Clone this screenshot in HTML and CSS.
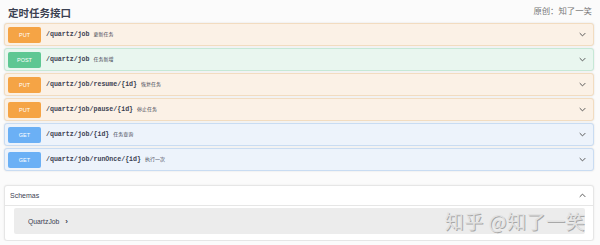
FILE: index.html
```html
<!DOCTYPE html>
<html>

<head>
    <title>定时任务接口</title>
    <link rel="stylesheet" href="styles.css">
</head>

<body>
    <div class="header">
        <h1>定时任务接口</h1>
        <span class="author">原创：知了一笑</span>
    </div>

    <div class="ops">
        <div class="op op-put">
            <span class="method">PUT</span>
            <span class="path">/quartz/job</span>
            <span class="desc">更新任务</span>
            <svg class="chevron" viewBox="0 0 10 6"><path d="M1 1l4 4 4-4"/></svg>
        </div>
        <div class="op op-post">
            <span class="method">POST</span>
            <span class="path">/quartz/job</span>
            <span class="desc">任务新增</span>
            <svg class="chevron" viewBox="0 0 10 6"><path d="M1 1l4 4 4-4"/></svg>
        </div>
        <div class="op op-put">
            <span class="method">PUT</span>
            <span class="path">/quartz/job/resume/{id}</span>
            <span class="desc">恢复任务</span>
            <svg class="chevron" viewBox="0 0 10 6"><path d="M1 1l4 4 4-4"/></svg>
        </div>
        <div class="op op-put">
            <span class="method">PUT</span>
            <span class="path">/quartz/job/pause/{id}</span>
            <span class="desc">停止任务</span>
            <svg class="chevron" viewBox="0 0 10 6"><path d="M1 1l4 4 4-4"/></svg>
        </div>
        <div class="op op-get">
            <span class="method">GET</span>
            <span class="path">/quartz/job/{id}</span>
            <span class="desc">任务查询</span>
            <svg class="chevron" viewBox="0 0 10 6"><path d="M1 1l4 4 4-4"/></svg>
        </div>
        <div class="op op-get">
            <span class="method">GET</span>
            <span class="path">/quartz/job/runOnce/{id}</span>
            <span class="desc">执行一次</span>
            <svg class="chevron" viewBox="0 0 10 6"><path d="M1 1l4 4 4-4"/></svg>
        </div>
    </div>

    <div class="schemas">
        <div class="schemas-head">
            <span>Schemas</span>
            <svg class="chevron-up" viewBox="0 0 10 6"><path d="M1 5l4-4 4 4"/></svg>
        </div>
        <div class="model">
            <span class="model-name">QuartzJob</span>
            <span class="model-arrow">›</span>
            <span class="watermark">知乎 @知了一笑</span>
        </div>
    </div>
</body>

</html>
```

FILE: styles.css
```css
body {
    font-family: "Liberation Sans", Arial, "Noto Sans CJK SC", sans-serif;
    background-color: #fbfbfb;
    margin: 0;
    padding: 0;
    color: #3b4151;
}

.header {
    display: flex;
    justify-content: space-between;
    align-items: flex-start;
    height: 23px;
    padding: 0 8px;
}

h1 {
    font-size: 10.5px;
    font-weight: bold;
    margin: 5px 0 0;
    color: #3b4151;
}

.author {
    font-size: 8.4px;
    color: #777;
    margin-top: 4px;
}

.ops {
    display: flex;
    flex-direction: column;
    gap: 2px;
    margin: 0 6px 0 4px;
}

.op {
    display: flex;
    align-items: center;
    height: 23px;
    box-sizing: border-box;
    padding: 0 3px;
    border: 1px solid;
    border-radius: 3px;
    box-shadow: 0 0 2px rgba(0, 0, 0, 0.12);
}

.method {
    width: 33px;
    height: 16px;
    line-height: 16px;
    border-radius: 2px;
    color: #fff;
    font-size: 5.5px;
    text-align: center;
    margin-right: 5px;
}

.path {
    font-family: "Liberation Mono", "Courier New", monospace;
    font-weight: bold;
    font-size: 6.6px;
    line-height: 8px;
    color: #3b4151;
    margin-right: 4px;
}

.desc {
    font-size: 5px;
    line-height: 6px;
    margin-bottom: 2px;
    color: #3b4151;
    flex: 1;
}

.chevron,
.chevron-up {
    width: 7px;
    height: 5px;
    margin-right: 4px;
    fill: none;
    stroke: #555;
    stroke-width: 1.4;
}

.op-put {
    background-color: #fbf1e6;
    border-color: #f2dcc0;
}

.op-put .method {
    background-color: #f5a445;
}

.op-post {
    background-color: #e9f6ef;
    border-color: #c6e8d6;
}

.op-post .method {
    background-color: #5ec793;
}

.op-get {
    background-color: #edf3fb;
    border-color: #c9dcf2;
}

.op-get .method {
    background-color: #6bb0f5;
}

.schemas {
    margin: 14px 6px 0 4px;
    height: 56px;
    box-sizing: border-box;
    border: 1px solid #e6e6e6;
    border-radius: 3px;
    background-color: #fff;
    box-shadow: 0 0 2px rgba(0, 0, 0, 0.08);
}

.schemas-head {
    display: flex;
    justify-content: space-between;
    align-items: center;
    height: 20px;
    box-sizing: border-box;
    padding: 0 3px 0 5px;
    border-bottom: 1px solid #e6e6e6;
    font-size: 7px;
    color: #3b4151;
}

.model {
    position: relative;
    display: flex;
    align-items: center;
    height: 26px;
    margin: 2px 8px 0 9px;
    padding-left: 14px;
    background-color: #ececec;
    border-radius: 2px;
    font-size: 6.8px;
    color: #3b4151;
}

.model-arrow {
    margin-left: 6px;
    font-weight: bold;
    font-size: 8px;
}

.watermark {
    position: absolute;
    right: 0;
    top: 3px;
    font-family: "Noto Sans CJK SC", sans-serif;
    font-size: 19px;
    line-height: 20px;
    color: #e2e2e2;
    text-shadow: 1px 1px 0 #a8a8a8;
    letter-spacing: 0.5px;
}
```
